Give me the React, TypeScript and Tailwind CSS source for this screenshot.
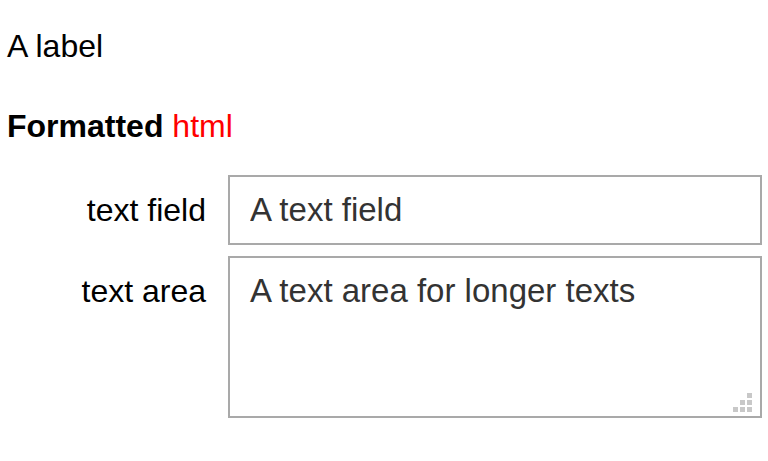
export default function App() {
  return (
    <div className="min-h-screen bg-white pt-[28px] pl-[7px] font-['Liberation_Sans',Arial,sans-serif] text-[32px] leading-[37px] text-black">
      <div>A label</div>

      <div className="mt-[43px]">
        <b>Formatted</b> <span className="text-[#ff0000]">html</span>
      </div>

      {/* Form rows */}
      <div className="mt-[30px] grid grid-cols-[199px_534px] gap-x-[22px] gap-y-[11px]">
        <label className="pt-[17px] text-right">text field</label>
        <input
          type="text"
          defaultValue="A text field"
          className="h-[70px] w-full border-2 border-[#a9a9a9] bg-white px-[20px] text-[33px] leading-[38px] text-[#333] outline-none"
        />

        <label className="pt-[17px] text-right">text area</label>
        <div className="relative">
          <textarea
            defaultValue="A text area for longer texts"
            className="block h-[162px] w-full resize-none border-2 border-[#a9a9a9] bg-white px-[20px] pt-[14px] text-[33px] leading-[38px] text-[#333] outline-none"
          />
          <svg
            className="pointer-events-none absolute right-[10px] bottom-[6px]"
            width="19"
            height="19"
            viewBox="0 0 19 19"
          >
            <g fill="#c8c8c8">
              <rect x="14" y="0" width="5" height="5" />
              <rect x="7" y="7" width="5" height="5" />
              <rect x="14" y="7" width="5" height="5" />
              <rect x="0" y="14" width="5" height="5" />
              <rect x="7" y="14" width="5" height="5" />
              <rect x="14" y="14" width="5" height="5" />
            </g>
          </svg>
        </div>
      </div>
    </div>
  );
}
